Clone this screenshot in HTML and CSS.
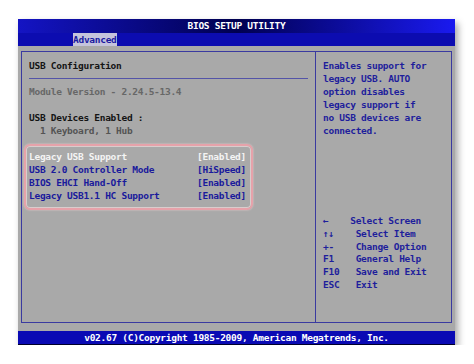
FILE: index.html
```html
<!DOCTYPE html>
<html lang="en">
<head>
  <meta charset="UTF-8">
  <meta name="viewport" content="width=device-width, initial-scale=1.0">
  <title>BIOS Setup Utility</title>
  <link rel="stylesheet" href="styles.css">
</head>
<body>
<div class="screen">
  <!-- Title and tab bar -->
  <div class="title-bar">BIOS SETUP UTILITY</div>
  <div class="tab-bar">
    <span class="tab active">Advanced</span>
  </div>

  <!-- Main area -->
  <div class="main">
    <div class="panels">
      <div class="left-panel">
        <div class="line heading">USB Configuration</div>
        <div class="rule"></div>
        <div class="line muted">Module Version - 2.24.5-13.4</div>
        <div class="line">&nbsp;</div>
        <div class="line heading">USB Devices Enabled :</div>
        <div class="line dim">  1 Keyboard, 1 Hub</div>

        <div class="options">
          <div class="option selected"><span>Legacy USB Support</span><span>[Enabled]</span></div>
          <div class="option"><span>USB 2.0 Controller Mode</span><span>[HiSpeed]</span></div>
          <div class="option"><span>BIOS EHCI Hand-Off</span><span>[Enabled]</span></div>
          <div class="option"><span>Legacy USB1.1 HC Support</span><span>[Enabled]</span></div>
        </div>
      </div>

      <div class="right-panel">
        <div class="help">
          <div class="line">Enables support for</div>
          <div class="line">legacy USB. AUTO</div>
          <div class="line">option disables</div>
          <div class="line">legacy support if</div>
          <div class="line">no USB devices are</div>
          <div class="line">connected.</div>
        </div>
        <div class="keys">
          <div class="key">←    Select Screen</div>
          <div class="key">↑↓    Select Item</div>
          <div class="key">+-    Change Option</div>
          <div class="key">F1    General Help</div>
          <div class="key">F10   Save and Exit</div>
          <div class="key">ESC   Exit</div>
        </div>
      </div>
    </div>
  </div>

  <!-- Footer -->
  <div class="footer">v02.67 (C)Copyright 1985-2009, American Megatrends, Inc.</div>
</div>
</body>
</html>
```

FILE: styles.css
```css
/* Page */
body {
  margin: 0;
  background: #ffffff;
  font-family: "DejaVu Sans Mono", "Liberation Mono", monospace;
  font-size: 9.5px;
  letter-spacing: -0.28px;
  font-weight: bold;
}

/* BIOS screen */
.screen {
  width: 437px;
  margin: 19px 0 0 18px;
  box-shadow: 3px 4px 7px rgba(0, 0, 0, 0.35);
}

.title-bar {
  height: 14px;
  line-height: 14px;
  text-align: center;
  color: #ffffff;
  background: linear-gradient(to right, #1414c4, #000050 50%, #1a1af0);
}

.tab-bar {
  height: 13px;
  line-height: 13px;
  background: #0c0cb0;
  padding-left: 55px;
}

.tab.active {
  display: inline-block;
  background: #c4c4dc;
  color: #1a1aa0;
  height: 13px;
}

/* Main grey area */
.main {
  background: #a9a9a9;
  padding: 5px 3px 8px 3px;
}

.panels {
  display: flex;
  height: 270px;
  border: 1px solid #3a3aa0;
}

.line {
  height: 13px;
  line-height: 13px;
  white-space: pre;
}

.left-panel {
  width: 294px;
  border-right: 1px solid #3a3aa0;
  padding: 7px 0 0 7px;
  box-sizing: border-box;
}

.heading {
  color: #141414;
}

.muted {
  color: #676767;
}

.dim {
  color: #545454;
}

.rule {
  height: 1px;
  background: #5454a8;
  margin: 6px 7px 6px 0;
}

/* Highlighted options */
.options {
  width: 229px;
  margin: 7px 0 0 -5px;
  padding: 4px 5px 6px 3px;
  box-sizing: border-box;
  border: 2px solid #e6a2aa;
  border-radius: 6px;
  box-shadow: inset 0 0 0 1px rgba(255, 235, 235, 0.55), 0 0 2px rgba(255, 220, 220, 0.8);
}

.option {
  display: flex;
  justify-content: space-between;
  height: 13px;
  line-height: 13px;
  color: #1a1a9c;
}

.option.selected {
  color: #f4f4f4;
}

/* Help panel */
.right-panel {
  flex: 1;
  padding: 7px 0 0 7px;
  color: #1e1e9c;
}

.keys {
  margin-top: 78px;
}

.key {
  height: 12.8px;
  line-height: 12.8px;
  white-space: pre;
}

/* Footer */
.footer {
  height: 13px;
  line-height: 13px;
  text-align: center;
  color: #ffffff;
  background: #0a0ab4;
  border-bottom: 1px solid #00002a;
}
```
